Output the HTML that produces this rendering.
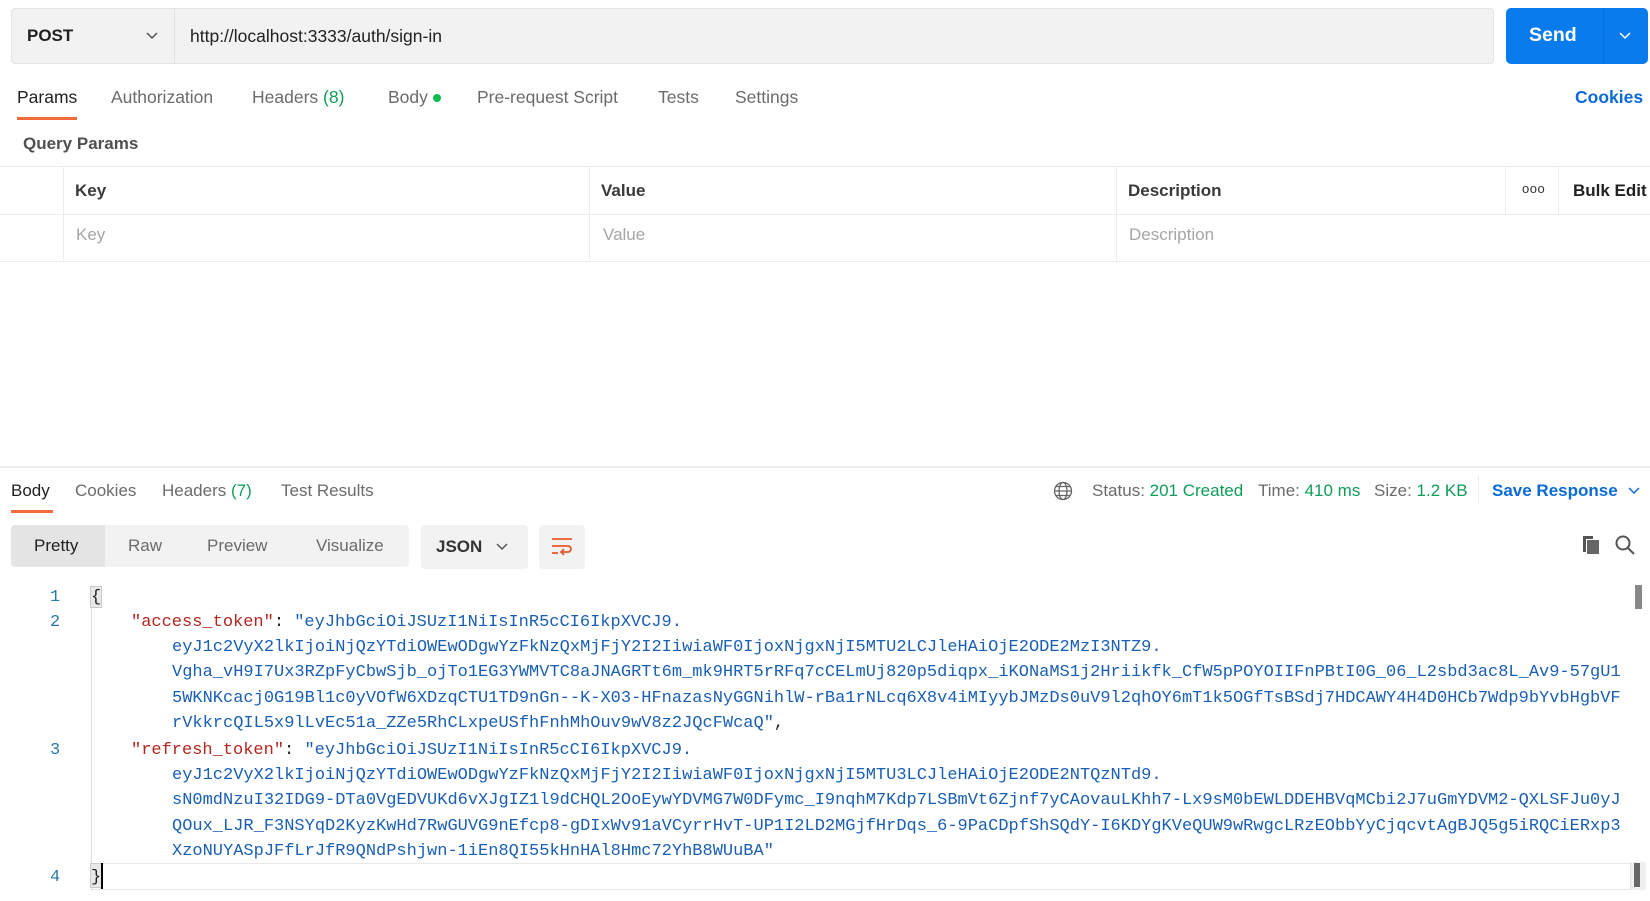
<!DOCTYPE html>
<html><head><meta charset="utf-8"><style>
*{box-sizing:border-box;margin:0;padding:0}
body{width:1650px;height:901px;overflow:hidden;background:#fff;font-family:"Liberation Sans",sans-serif;color:#212121;position:relative}
.a{position:absolute;white-space:nowrap}
.tab{font-size:17.5px;color:#6b6b6b;top:87px}
.rt{font-size:17px;color:#6b6b6b;top:481px}
.g{color:#0f9d58}
.mono{font-family:"Liberation Mono",monospace;font-size:17px;letter-spacing:0;color:#1a5fb4;position:absolute;white-space:nowrap;left:172px}
.k{color:#b3261e}
.p{color:#212121}
.ln{position:absolute;left:50px;font-family:"Liberation Mono",monospace;font-size:17px;color:#2a7aa8}
.th{font-size:17px;font-weight:bold;color:#3a3a3a;top:181px}
.ph{font-size:17px;color:#a6a6a6;top:225px}
</style></head><body>
<div class="a" style="left:11px;top:8px;width:1483px;height:56px;background:#f2f2f2;border:1px solid #e4e4e4;border-radius:4px"></div>
<div class="a" style="left:174px;top:9px;width:1px;height:54px;background:#e2e2e2"></div>
<div class="a" style="left:27px;top:26px;font-size:17px;font-weight:bold;color:#212121">POST</div>
<svg class="a" style="left:145px;top:31px" width="14" height="10"><path d="M2 2l5 5 5-5" fill="none" stroke="#555" stroke-width="1.5"/></svg>
<div class="a" style="left:190px;top:26px;font-size:17.5px;color:#212121">http://localhost:3333/auth/sign-in</div>
<div class="a" style="left:1506px;top:8px;width:142px;height:56px;background:#097bed;border-radius:5px"></div>
<div class="a" style="left:1603px;top:8px;width:1px;height:56px;background:#0a6fd4"></div>
<div class="a" style="left:1529px;top:24px;font-size:19.5px;font-weight:bold;color:#fff">Send</div>
<svg class="a" style="left:1618px;top:31px" width="14" height="10"><path d="M2 2l5 5 5-5" fill="none" stroke="#fff" stroke-width="1.5"/></svg>
<div class="a tab" style="left:17px;color:#212121">Params</div>
<div class="a" style="left:17px;top:117px;width:60px;height:3px;background:#f26b3a"></div>
<div class="a tab" style="left:111px">Authorization</div>
<div class="a tab" style="left:252px">Headers <span class="g">(8)</span></div>
<div class="a tab" style="left:388px">Body</div>
<div class="a" style="left:433px;top:94px;width:8px;height:8px;border-radius:50%;background:#0cbb52"></div>
<div class="a tab" style="left:477px">Pre-request Script</div>
<div class="a tab" style="left:658px">Tests</div>
<div class="a tab" style="left:735px">Settings</div>
<div class="a" style="left:1575px;top:87px;font-size:17.5px;font-weight:bold;color:#0b6bd6">Cookies</div>
<div class="a" style="left:23px;top:134px;font-size:17px;font-weight:bold;color:#505050">Query Params</div>
<div class="a" style="left:0;top:166px;width:1650px;height:1px;background:#ececec"></div>
<div class="a" style="left:0;top:214px;width:1650px;height:1px;background:#ececec"></div>
<div class="a" style="left:0;top:261px;width:1650px;height:1px;background:#ececec"></div>
<div class="a" style="left:63px;top:166px;width:1px;height:95px;background:#ececec"></div>
<div class="a" style="left:589px;top:166px;width:1px;height:95px;background:#ececec"></div>
<div class="a" style="left:1116px;top:166px;width:1px;height:95px;background:#ececec"></div>
<div class="a" style="left:1505px;top:166px;width:1px;height:48px;background:#ececec"></div>
<div class="a" style="left:1558px;top:166px;width:1px;height:48px;background:#ececec"></div>
<div class="a th" style="left:75px">Key</div>
<div class="a th" style="left:601px">Value</div>
<div class="a th" style="left:1128px">Description</div>
<div class="a" style="left:1522px;top:181px;font-size:13px;color:#333;letter-spacing:0.5px">ooo</div>
<div class="a th" style="left:1573px;color:#212121">Bulk Edit</div>
<div class="a ph" style="left:76px">Key</div>
<div class="a ph" style="left:603px">Value</div>
<div class="a ph" style="left:1129px">Description</div>
<div class="a" style="left:0;top:466px;width:1650px;height:2px;background:#ededed"></div>
<div class="a rt" style="left:11px;color:#212121">Body</div>
<div class="a" style="left:11px;top:510px;width:42px;height:3px;background:#f26b3a"></div>
<div class="a rt" style="left:75px">Cookies</div>
<div class="a rt" style="left:162px">Headers <span class="g">(7)</span></div>
<div class="a rt" style="left:281px">Test Results</div>
<svg class="a" style="left:1053px;top:481px" width="20" height="20" viewBox="0 0 20 20" fill="none" stroke="#666" stroke-width="1.3"><circle cx="10" cy="10" r="8.5"/><ellipse cx="10" cy="10" rx="4" ry="8.5"/><path d="M1.5 10h17M3 5.5h14M3 14.5h14"/></svg>
<div class="a rt" style="left:1092px">Status: <span class="g">201 Created</span></div>
<div class="a rt" style="left:1258px">Time: <span class="g">410 ms</span></div>
<div class="a rt" style="left:1374px">Size: <span class="g">1.2 KB</span></div>
<div class="a" style="left:1478px;top:476px;width:1px;height:28px;background:#ececec"></div>
<div class="a" style="left:1492px;top:481px;font-size:17px;font-weight:bold;color:#0b6bd6">Save Response</div>
<svg class="a" style="left:1627px;top:486px" width="14" height="10"><path d="M2 2l5 5 5-5" fill="none" stroke="#0b6bd6" stroke-width="1.5"/></svg>
<div class="a" style="left:11px;top:525px;width:398px;height:42px;background:#f2f2f2;border-radius:4px"></div>
<div class="a" style="left:11px;top:525px;width:94px;height:42px;background:#e4e4e4;border-radius:4px 0 0 4px"></div>
<div class="a" style="left:34px;top:536px;font-size:17px;color:#212121">Pretty</div>
<div class="a" style="left:128px;top:536px;font-size:17px;color:#6b6b6b">Raw</div>
<div class="a" style="left:207px;top:536px;font-size:17px;color:#6b6b6b">Preview</div>
<div class="a" style="left:316px;top:536px;font-size:17px;color:#6b6b6b">Visualize</div>
<div class="a" style="left:421px;top:525px;width:107px;height:44px;background:#f2f2f2;border-radius:4px"></div>
<div class="a" style="left:436px;top:537px;font-size:17px;font-weight:bold;color:#333">JSON</div>
<svg class="a" style="left:495px;top:542px" width="14" height="10"><path d="M2 2l5 5 5-5" fill="none" stroke="#555" stroke-width="1.5"/></svg>
<div class="a" style="left:539px;top:525px;width:46px;height:44px;background:#f2f2f2;border-radius:4px"></div>
<svg class="a" style="left:550px;top:537px" width="24" height="20" viewBox="0 0 24 20" fill="none" stroke="#e8592a" stroke-width="1.8"><path d="M2 2h20M2 9h16a3 3 0 0 1 0 6h-6M14 12l-3 3 3 3M2 16h6"/></svg>
<svg class="a" style="left:1580px;top:534px" width="22" height="22" viewBox="0 0 22 22"><path d="M3 2h10v3H6v13H3z" fill="#555"/><rect x="7" y="6" width="12" height="14" fill="#666"/></svg>
<svg class="a" style="left:1614px;top:534px" width="22" height="22" viewBox="0 0 22 22" fill="none" stroke="#555" stroke-width="2"><circle cx="9" cy="9" r="6.5"/><path d="M14 14l6 6"/></svg>
<div class="a" style="left:91px;top:585px;width:1px;height:305px;background:#ddd"></div>
<div class="a" style="left:1635px;top:585px;width:7px;height:24px;background:#888"></div>
<div class="a" style="left:1630px;top:862px;width:16px;height:28px;background:#f0f0f0;border-left:1px solid #ddd"></div>
<div class="a" style="left:1634px;top:863px;width:6px;height:24px;background:#666"></div>
<div class="a" style="left:92px;top:863px;width:1538px;height:1px;background:#e8e8e8"></div>
<div class="a" style="left:92px;top:889px;width:1538px;height:1px;background:#e8e8e8"></div>
<div class="ln" style="top:588px">1</div>
<div class="ln" style="top:613px">2</div>
<div class="ln" style="top:741px">3</div>
<div class="ln" style="top:868px">4</div>
<div class="a" style="left:90px;top:586px;width:12px;height:22px;background:#e8e8e8;border:1px solid #ccc"></div>
<div class="mono p" style="left:91px;top:588px">{</div>
<div class="a" style="left:90px;top:863px;width:12px;height:25px;background:#e8e8e8;border:1px solid #ccc"></div>
<div class="mono p" style="left:91px;top:868px">}</div>
<div class="a" style="left:101px;top:863px;width:2px;height:26px;background:#000"></div>
<div class="mono" style="left:131px;top:613px"><span class="k">"access_token"</span><span class="p">: </span>"eyJhbGciOiJSUzI1NiIsInR5cCI6IkpXVCJ9.</div>
<div class="mono" style="top:638px">eyJ1c2VyX2lkIjoiNjQzYTdiOWEwODgwYzFkNzQxMjFjY2I2IiwiaWF0IjoxNjgxNjI5MTU2LCJleHAiOjE2ODE2MzI3NTZ9.</div>
<div class="mono" style="top:663px">Vgha_vH9I7Ux3RZpFyCbwSjb_ojTo1EG3YWMVTC8aJNAGRTt6m_mk9HRT5rRFq7cCELmUj820p5diqpx_iKONaMS1j2Hriikfk_CfW5pPOYOIIFnPBtI0G_06_L2sbd3ac8L_Av9-57gU1</div>
<div class="mono" style="top:689px">5WKNKcacj0G19Bl1c0yVOfW6XDzqCTU1TD9nGn--K-X03-HFnazasNyGGNihlW-rBa1rNLcq6X8v4iMIyybJMzDs0uV9l2qhOY6mT1k5OGfTsBSdj7HDCAWY4H4D0HCb7Wdp9bYvbHgbVF</div>
<div class="mono" style="top:714px">rVkkrcQIL5x9lLvEc51a_ZZe5RhCLxpeUSfhFnhMhOuv9wV8z2JQcFWcaQ"<span class="p">,</span></div>
<div class="mono" style="left:131px;top:741px"><span class="k">"refresh_token"</span><span class="p">: </span>"eyJhbGciOiJSUzI1NiIsInR5cCI6IkpXVCJ9.</div>
<div class="mono" style="top:766px">eyJ1c2VyX2lkIjoiNjQzYTdiOWEwODgwYzFkNzQxMjFjY2I2IiwiaWF0IjoxNjgxNjI5MTU3LCJleHAiOjE2ODE2NTQzNTd9.</div>
<div class="mono" style="top:791px">sN0mdNzuI32IDG9-DTa0VgEDVUKd6vXJgIZ1l9dCHQL2OoEywYDVMG7W0DFymc_I9nqhM7Kdp7LSBmVt6Zjnf7yCAovauLKhh7-Lx9sM0bEWLDDEHBVqMCbi2J7uGmYDVM2-QXLSFJu0yJ</div>
<div class="mono" style="top:817px">QOux_LJR_F3NSYqD2KyzKwHd7RwGUVG9nEfcp8-gDIxWv91aVCyrrHvT-UP1I2LD2MGjfHrDqs_6-9PaCDpfShSQdY-I6KDYgKVeQUW9wRwgcLRzEObbYyCjqcvtAgBJQ5g5iRQCiERxp3</div>
<div class="mono" style="top:842px">XzoNUYASpJFfLrJfR9QNdPshjwn-1iEn8QI55kHnHAl8Hmc72YhB8WUuBA"</div>
</body></html>
